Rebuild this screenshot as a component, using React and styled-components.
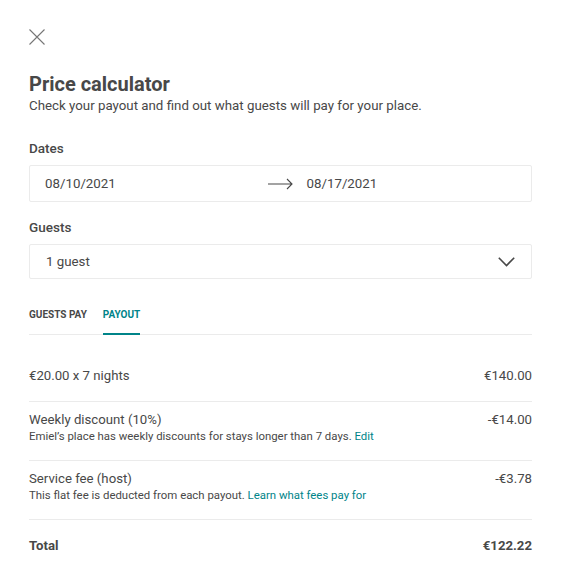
import React from "react";
import styled, { createGlobalStyle } from "styled-components";

const Global = createGlobalStyle`
  html, body { margin: 0; padding: 0; background: #fff; }
  body { font-family: Roboto, "Noto Sans", sans-serif; color: #484848; -webkit-font-smoothing: antialiased; }
  * { box-sizing: border-box; }
`;

const Page = styled.div`
  width: 564px;
  padding: 29px 32px 0 29px;
`;

const CloseButton = styled.button`
  display: block;
  width: 16px;
  height: 16px;
  padding: 0;
  border: 0;
  background: none;
  cursor: pointer;
  svg { display: block; }
`;

const Title = styled.h1`
  margin: 27px 0 0;
  font-size: 20px;
  line-height: 24px;
  font-weight: 700;
  color: #484848;
`;

const Subtitle = styled.p`
  margin: 0;
  font-size: 13.3px;
  line-height: 20px;
`;

const Field = styled.div`
  margin-top: ${(p) => p.$mt}px;
`;

const Label = styled.div`
  font-size: 13.5px;
  line-height: 18px;
  font-weight: 500;
  margin-bottom: 8px;
`;

const InputBox = styled.div`
  display: flex;
  align-items: center;
  height: ${(p) => p.$h}px;
  border: 1px solid #ebebeb;
  border-radius: 2px;
  padding: 0 16px 0 ${(p) => p.$pl}px;
  font-size: 13.3px;
`;

const DateGrid = styled.div`
  flex: 1;
  display: grid;
  grid-template-columns: 1fr auto 1fr;
  align-items: center;
`;

const SecondDate = styled.span`
  padding-left: 14px;
`;

const Grow = styled.div`
  flex: 1;
`;

const Tabs = styled.div`
  display: flex;
  gap: 16px;
  margin-top: 20px;
  border-bottom: 1px solid #ebebeb;
`;

const Tab = styled.div`
  font-size: 10px;
  font-weight: 700;
  text-transform: uppercase;
  line-height: 14px;
  padding: 9px 0 11px;
  color: ${(p) => (p.$active ? "#008489" : "#484848")};
  border-bottom: 2px solid ${(p) => (p.$active ? "#008489" : "transparent")};
  margin-bottom: -1px;
`;

const List = styled.div`
  margin-top: 23px;
`;

const Row = styled.div`
  display: flex;
  justify-content: space-between;
  align-items: flex-start;
  padding: ${(p) => (p.$total ? "16px" : "8px")} 0 16px;
  border-bottom: ${(p) => (p.$total ? "none" : "1px solid #ebebeb")};
  font-weight: ${(p) => (p.$total ? 700 : 400)};
`;

const RowMain = styled.div`
  font-size: 13.2px;
  line-height: 19px;
`;

const RowSub = styled.div`
  font-size: 11.4px;
  line-height: 15px;
`;

const Amount = styled.div`
  font-size: 13.2px;
  line-height: 19px;
`;

const Link = styled.a`
  color: #008489;
  text-decoration: none;
`;

const X = () => (
  <svg width="16" height="16" viewBox="0 0 16 16" fill="none" stroke="#767676" strokeWidth="1.1">
    <path d="M0.5 0.5 L15.5 15.5 M15.5 0.5 L0.5 15.5" />
  </svg>
);

const Arrow = () => (
  <svg width="25" height="12" viewBox="0 0 25 12" fill="none" stroke="#484848" strokeWidth="1.1">
    <path d="M0 6 H24 M19 1 L24 6 L19 11" />
  </svg>
);

const Chevron = () => (
  <svg width="17" height="10" viewBox="0 0 17 10" fill="none" stroke="#484848" strokeWidth="1.6">
    <path d="M0.8 0.8 L8.5 8.5 L16.2 0.8" />
  </svg>
);

export default function App() {
  return (
    <>
      <Global />
      <Page>
        <CloseButton aria-label="Close"><X /></CloseButton>
        <Title>Price calculator</Title>
        <Subtitle>Check your payout and find out what guests will pay for your place.</Subtitle>

        <Field $mt={23}>
          <Label>Dates</Label>
          <InputBox $h={37} $pl={15}>
            <DateGrid>
              <span>08/10/2021</span>
              <Arrow />
              <SecondDate>08/17/2021</SecondDate>
            </DateGrid>
          </InputBox>
        </Field>

        <Field $mt={16}>
          <Label>Guests</Label>
          <InputBox $h={35} $pl={16}>
            <Grow>1 guest</Grow>
            <Chevron />
          </InputBox>
        </Field>

        <Tabs>
          <Tab>Guests pay</Tab>
          <Tab $active>Payout</Tab>
        </Tabs>

        <List>
          <Row>
            <RowMain>€20.00 x 7 nights</RowMain>
            <Amount>€140.00</Amount>
          </Row>
          <Row>
            <div>
              <RowMain>Weekly discount (10%)</RowMain>
              <RowSub>Emiel’s place has weekly discounts for stays longer than 7 days. <Link href="#">Edit</Link></RowSub>
            </div>
            <Amount>-€14.00</Amount>
          </Row>
          <Row>
            <div>
              <RowMain>Service fee (host)</RowMain>
              <RowSub>This flat fee is deducted from each payout. <Link href="#">Learn what fees pay for</Link></RowSub>
            </div>
            <Amount>-€3.78</Amount>
          </Row>
          <Row $total>
            <RowMain>Total</RowMain>
            <Amount>€122.22</Amount>
          </Row>
        </List>
      </Page>
    </>
  );
}
